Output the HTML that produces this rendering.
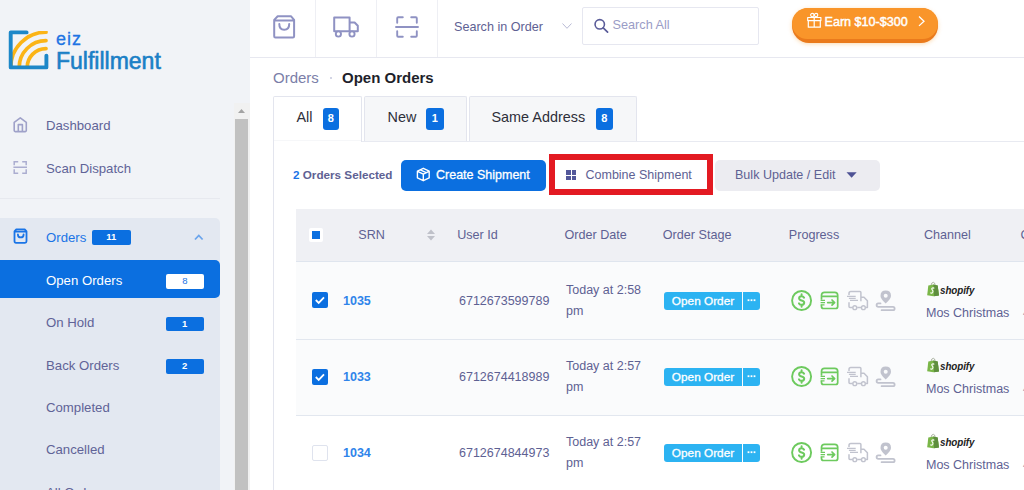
<!DOCTYPE html>
<html><head><meta charset="utf-8">
<style>
*{box-sizing:border-box;margin:0;padding:0}
html,body{width:1024px;height:490px;overflow:hidden;background:#fff}
body{position:relative;font-family:"Liberation Sans",sans-serif;color:#5e6193}
.a{position:absolute;white-space:nowrap}
svg{position:absolute;overflow:visible}
#sb{position:absolute;left:0;top:0;width:250px;height:490px;background:#f1f3f7}
.mi{position:absolute;left:46px;font-size:13.2px;line-height:16px;color:#606397;margin-top:0.5px}
.bd{position:absolute;height:14.4px;border-radius:2px;background:#0b6fe0;color:#fff;font-size:9.5px;font-weight:bold;text-align:center;line-height:14.4px}
.hd{position:absolute;top:227px;font-size:12.6px;line-height:16px;color:#5e6193}
.tab{position:absolute;top:96px;height:45px;border:1px solid #e3e5ee;border-bottom:none;background:#f6f7f9;border-radius:2px 2px 0 0}
.tabt{position:absolute;font-size:14.4px;line-height:17px;color:#2e2f3a;margin-top:1px;margin-left:0.5px}
.tb{position:absolute;top:108.4px;width:16.5px;height:21.3px;border-radius:3px;background:#0b6fe0;color:#fff;font-size:11px;font-weight:bold;text-align:center;line-height:21.3px}
.row{position:absolute;left:296px;width:728px;height:77px}
.rl{position:absolute;left:296px;width:728px;height:1px;background:#e2e7ef}
</style></head><body>

<!-- SIDEBAR -->
<div id="sb"></div>
<svg width="60" height="60" style="left:0;top:0" viewBox="0 0 60 60">
  <defs><clipPath id="lc"><rect x="10" y="31" width="40" height="37"/></clipPath></defs>
  <g clip-path="url(#lc)" fill="none" stroke="#fbb416" stroke-width="3.7" stroke-linecap="round">
    <path d="M46 32.2 A35.2 35.2 0 0 0 10.8 67.4"/>
    <path d="M46 40.6 A26.8 26.8 0 0 0 19.2 67.4"/>
    <path d="M46 48.6 A18.8 18.8 0 0 0 27.2 67.4"/>
  </g>
  <path d="M26.6 32.4 H10.7 V67.4 H46.4 V55.6" fill="none" stroke="#1d87c8" stroke-width="3.9" stroke-linecap="round" stroke-linejoin="round"/>
</svg>
<div class="a" style="left:56px;top:28.5px;font-size:18px;line-height:20px;color:#1f74e3;letter-spacing:1px;-webkit-text-stroke:0.3px #1f74e3">eiz</div>
<div class="a" style="left:56px;top:47px;font-size:23px;line-height:26px;color:#1b80c6;-webkit-text-stroke:0.6px #1b80c6;margin-top:0.5px">Fulfillment</div>

<!-- home -->
<svg width="20" height="20" style="left:10px;top:114px" viewBox="0 0 20 20">
  <path d="M4.2 8.3 L10.3 3.9 L16.3 8.3 V16.6 Q16.3 17.6 15.3 17.6 H5.2 Q4.2 17.6 4.2 16.6 Z M8.3 17.6 V10.6 H12.4 V17.6" fill="none" stroke="#9fa1c9" stroke-width="1.6" stroke-linejoin="round"/>
</svg>
<div class="mi" style="top:117px">Dashboard</div>
<!-- scan -->
<svg width="20" height="20" style="left:10px;top:157px" viewBox="0 0 20 20">
  <path d="M4.2 8.3 V4.8 H8.2 M12.2 4.8 H16.2 V8.3 M4.2 12.2 V16.2 H8.2 M12.2 16.2 H16.2 V12.2 M3.4 10.3 H17" fill="none" stroke="#abadd0" stroke-width="1.5"/>
</svg>
<div class="mi" style="top:160px">Scan Dispatch</div>
<div class="a" style="left:0;top:197.5px;width:220px;height:1px;background:#e7e9ef"></div>

<!-- orders group -->
<div class="a" style="left:0;top:218px;width:220px;height:290px;background:#e3e8f1;border-radius:0 5px 0 0"></div>
<svg width="20" height="20" style="left:10px;top:226px" viewBox="0 0 20 20">
  <path d="M6.3 3.3 H14.7 L16.5 5.4 V15.3 Q16.5 16.8 15 16.8 H6 Q4.5 16.8 4.5 15.3 V5.4 Z M4.6 5.6 H16.4 M7.9 8.4 Q7.9 11.4 10.75 11.4 Q13.6 11.4 13.6 8.4" fill="none" stroke="#1a74e6" stroke-width="1.8" stroke-linejoin="round" stroke-linecap="round"/>
</svg>
<div class="mi" style="top:229px;color:#1a74e6">Orders</div>
<div class="bd" style="left:92px;top:230.4px;width:38.6px">11</div>
<svg width="12" height="10" style="left:193px;top:232px" viewBox="0 0 12 10">
  <path d="M2 7.5 L5.8 3.5 L9.6 7.5" fill="none" stroke="#6aa4ec" stroke-width="1.8"/>
</svg>

<div class="a" style="left:0;top:260.3px;width:220px;height:38px;background:#0b6fe0;border-radius:0 5px 5px 0"></div>
<div class="mi" style="top:272px;color:#fff">Open Orders</div>
<div class="bd" style="left:165.8px;top:274.2px;width:38.2px;background:#fff;color:#1a74e6;font-weight:normal">8</div>
<div class="mi" style="top:314px">On Hold</div>
<div class="bd" style="left:165.5px;top:316.5px;width:38.5px">1</div>
<div class="mi" style="top:357px">Back Orders</div>
<div class="bd" style="left:165.5px;top:359.2px;width:38.5px">2</div>
<div class="mi" style="top:399px">Completed</div>
<div class="mi" style="top:441px">Cancelled</div>
<div class="mi" style="top:484px">All Orders</div>

<!-- scrollbar -->
<div class="a" style="left:234px;top:103px;width:16px;height:387px;background:#f1f1f1"></div>
<svg width="16" height="10" style="left:234px;top:106px" viewBox="0 0 16 10"><path d="M4 7 L7.5 3 L11 7 Z" fill="#a3a3a3"/></svg>
<div class="a" style="left:235px;top:119px;width:13px;height:371px;background:#c1c1c1"></div>

<!-- TOP BAR -->
<div class="a" style="left:250px;top:56.5px;width:774px;height:1px;background:#e7e8f0"></div>
<div class="a" style="left:315px;top:0;width:1px;height:57px;background:#eeeff4"></div>
<div class="a" style="left:376px;top:0;width:1px;height:57px;background:#eeeff4"></div>
<div class="a" style="left:437px;top:0;width:1px;height:57px;background:#eeeff4"></div>

<!-- top icons -->
<svg width="26" height="28" style="left:271px;top:13px" viewBox="0 0 26 28">
  <path d="M6.7 3.2 H19.9 L23.1 6.9 V23.3 Q23.1 24.5 21.9 24.5 H4.4 Q3.2 24.5 3.2 23.3 V6.9 Z M3.4 7.4 H22.9 M8.3 11 Q8.3 16.8 13.2 16.8 Q18.2 16.8 18.2 11" fill="none" stroke="#8f92c3" stroke-width="2" stroke-linejoin="round" stroke-linecap="round"/>
</svg>
<svg width="30" height="26" style="left:330px;top:13px" viewBox="0 0 30 26">
  <path d="M4.2 18.2 V4.6 H19.6 V18.2 Z M19.6 9.5 H24.6 L27.8 12.8 V18.2 H19.6" fill="none" stroke="#8f92c3" stroke-width="2" stroke-linejoin="round"/>
  <circle cx="8.4" cy="21" r="2.6" fill="#fff" stroke="#8f92c3" stroke-width="1.9"/>
  <circle cx="22" cy="21" r="2.6" fill="#fff" stroke="#8f92c3" stroke-width="1.9"/>
</svg>
<svg width="28" height="28" style="left:393px;top:13px" viewBox="0 0 28 28">
  <path d="M4.2 9.8 V5.2 Q4.2 4.2 5.2 4.2 H9.8 M18.2 4.2 H22.8 Q23.8 4.2 23.8 5.2 V9.8 M4.2 18.2 V22.8 Q4.2 23.8 5.2 23.8 H9.8 M18.2 23.8 H22.8 Q23.8 23.8 23.8 22.8 V18.2 M3 14 H25" fill="none" stroke="#8f92c3" stroke-width="1.9" stroke-linecap="round"/>
</svg>
<div class="a" style="left:454px;top:19px;font-size:12.6px;line-height:16px;color:#5e6193">Search in Order</div>
<svg width="14" height="10" style="left:560px;top:21px" viewBox="0 0 14 10"><path d="M2.5 2.5 L7 7.3 L11.5 2.5" fill="none" stroke="#b9bbd6" stroke-width="1"/></svg>
<div class="a" style="left:582px;top:7.3px;width:177px;height:37.5px;border:1px solid #e6e7f0;border-radius:2px;background:#fff"></div>
<svg width="22" height="22" style="left:590px;top:16px" viewBox="0 0 22 22">
  <circle cx="9.75" cy="8.3" r="4.7" fill="none" stroke="#5a5c99" stroke-width="1.6"/>
  <path d="M13.2 11.8 L17.6 16.2" stroke="#5a5c99" stroke-width="1.7" stroke-linecap="round"/>
</svg>
<div class="a" style="left:612.5px;top:16.5px;font-size:12.7px;line-height:16px;color:#9a9cc6">Search All</div>

<!-- earn -->
<div class="a" style="left:791.5px;top:8px;width:146px;height:34.5px;border-radius:17px;background:#ea7a1c;box-shadow:0 1px 4px rgba(247,148,30,0.35)"></div>
<div class="a" style="left:791.5px;top:8px;width:146px;height:31px;border-radius:16px;background:#f9952a"></div>
<svg width="18" height="18" style="left:805px;top:11px" viewBox="0 0 18 18">
  <path d="M2.7 6.5 H15.9 V9.6 H2.7 Z M3.3 9.6 H15.3 V16.2 H3.3 Z M9.2 6.5 V16.2" fill="none" stroke="#fff" stroke-width="1.2" stroke-linejoin="round"/>
  <circle cx="7.3" cy="4.1" r="1.7" fill="none" stroke="#fff" stroke-width="1.1"/>
  <circle cx="11.1" cy="4.1" r="1.7" fill="none" stroke="#fff" stroke-width="1.1"/>
</svg>
<div class="a" style="left:824.5px;top:13.5px;font-size:12.6px;line-height:16px;color:#fff;-webkit-text-stroke:0.45px #fff">Earn $10-$300</div>
<svg width="12" height="14" style="left:916px;top:14px" viewBox="0 0 12 14"><path d="M3 2.5 L8 7.2 L3 11.9" fill="none" stroke="#fff" stroke-width="1.3"/></svg>

<!-- breadcrumb -->
<div class="a" style="left:273px;top:69px;font-size:15px;line-height:18px;color:#7b7ea8">Orders</div>
<div class="a" style="left:329.5px;top:76.5px;width:2px;height:2px;background:#c5c7dc;border-radius:1px"></div>
<div class="a" style="left:342px;top:69px;font-size:15px;line-height:18px;font-weight:bold;color:#1e1f2b">Open Orders</div>

<!-- tabs -->
<div class="a" style="left:273px;top:141px;width:751px;height:349px;border-left:1px solid #e3e5ee;border-top:1px solid #e8eaf1"></div>
<div class="tab" style="left:364px;width:103px"></div>
<div class="tab" style="left:469px;width:167.5px"></div>
<div class="tab" style="left:273px;width:89px;height:46px;background:#fff"></div>
<div class="a" style="left:274px;top:140px;width:87px;height:1px;background:#f6f7f9"></div>
<div class="tabt" style="left:296px;top:108px">All</div>
<div class="tb" style="left:322.5px">8</div>
<div class="tabt" style="left:387px;top:108px">New</div>
<div class="tb" style="left:426px;width:17.6px">1</div>
<div class="tabt" style="left:491px;top:108px">Same Address</div>
<div class="tb" style="left:596px">8</div>

<!-- action bar -->
<div class="a" style="left:293px;top:166.5px;font-size:11.7px;line-height:15px;font-weight:bold;color:#5e6193"><span style="color:#1a74e6">2</span> Orders Selected</div>
<div class="a" style="left:401px;top:160px;width:144.5px;height:31px;border-radius:5px;background:#0b6fe0"></div>
<svg width="16" height="16" style="left:415px;top:165.5px" viewBox="0 0 16 16">
  <path d="M8.3 2.3 L14.2 5.2 V11.8 L8.3 14.7 L2.4 11.8 V5.2 Z M2.6 5.3 L8.3 8.2 L14 5.3 M8.3 8.2 V14.5 M5.3 3.8 L11.1 6.7" fill="none" stroke="#fff" stroke-width="1.4" stroke-linejoin="round"/>
</svg>
<div class="a" style="left:436px;top:167px;font-size:12.5px;line-height:16px;color:#fff;-webkit-text-stroke:0.3px #fff">Create Shipment</div>

<div class="a" style="left:549px;top:154px;width:163.5px;height:40.6px;border:6px solid #e31a22;background:#fff"></div>
<svg width="12" height="12" style="left:565px;top:169px" viewBox="0 0 12 12" shape-rendering="crispEdges">
  <rect x="1" y="1" width="4.6" height="4.6" fill="#53579a"/><rect x="6.6" y="1" width="4.6" height="4.6" fill="#53579a"/>
  <rect x="1" y="6.6" width="4.6" height="4.6" fill="#53579a"/><rect x="6.6" y="6.6" width="4.6" height="4.6" fill="#53579a"/>
</svg>
<div class="a" style="left:585.5px;top:166.7px;font-size:12.5px;line-height:16px;color:#5e6193">Combine Shipment</div>

<div class="a" style="left:715px;top:160px;width:164.5px;height:31px;border-radius:5px;background:#ececf1"></div>
<div class="a" style="left:735px;top:167px;font-size:12.55px;line-height:16px;color:#5e6193">Bulk Update / Edit</div>
<svg width="12" height="8" style="left:846px;top:171px" viewBox="0 0 12 8"><path d="M0.5 1.3 H10.7 L5.6 6.8 Z" fill="#4e5294"/></svg>

<!-- table header -->
<div class="a" style="left:296px;top:209.3px;width:728px;height:53px;background:#eff0f4;border-bottom:1px solid #dfe5ee"></div>
<div class="a" style="left:309px;top:227.5px;width:14px;height:14px;background:#fff;border-radius:2px"></div>
<div class="a" style="left:312px;top:230.5px;width:8px;height:8px;background:#0b6fe0"></div>
<div class="hd" style="left:358.3px">SRN</div>
<svg width="10" height="14" style="left:425.5px;top:228px" viewBox="0 0 10 14"><path d="M1 6 L5 1.5 L9 6 Z M1 8 L5 12.5 L9 8 Z" fill="#bfc1c9"/></svg>
<div class="hd" style="left:457.2px">User Id</div>
<div class="hd" style="left:564.5px">Order Date</div>
<div class="hd" style="left:662.8px">Order Stage</div>
<div class="hd" style="left:788.8px">Progress</div>
<div class="hd" style="left:924px">Channel</div>
<div class="hd" style="left:1020.5px">C</div>

<div class="row" style="top:262.3px;background:#fafbfc"></div>
<div class="a" style="left:312px;top:292.2px;width:15.5px;height:15.8px;border-radius:2px;background:#0b6fe0"></div>
<svg width="16" height="16" style="left:312px;top:292.2px" viewBox="0 0 16 16"><path d="M3.8 8 L6.7 10.9 L12 5.4" fill="none" stroke="#fff" stroke-width="1.8"/></svg>
<div class="a" style="left:343px;top:292.5px;font-size:12.5px;line-height:16px;font-weight:bold;color:#2f84ea">1035</div>
<div class="a" style="left:459px;top:292.5px;font-size:12.5px;line-height:16px;color:#5e6193">6712673599789</div>
<div class="a" style="left:566px;top:280px;font-size:12.5px;line-height:21px;color:#5e6193">Today at 2:58<br>pm</div>
<div class="a" style="left:664px;top:292px;width:78px;height:17.8px;border-radius:3px 0 0 3px;background:#2cb3f2;color:#fff;font-size:11.8px;line-height:19px;text-align:center;-webkit-text-stroke:0.3px #fff">Open Order</div>
<div class="a" style="left:743px;top:292px;width:17px;height:17.8px;border-radius:0 3px 3px 0;background:#2cb3f2"></div>
<svg width="17" height="18" style="left:743px;top:292px" viewBox="0 0 17 18"><g fill="#fff"><rect x="4.6" y="7.3" width="1.8" height="1.8"/><rect x="7.6" y="7.3" width="1.8" height="1.8"/><rect x="10.6" y="7.3" width="1.8" height="1.8"/></g></svg>
<svg width="110" height="24" style="left:788px;top:288px" viewBox="0 0 110 24">
  <circle cx="13.6" cy="12.5" r="9.5" fill="none" stroke="#6dca5e" stroke-width="1.9"/>
  <path d="M16.1 9.7 Q15.3 8.2 13.6 8.2 Q11.1 8.2 11.1 10.3 Q11.1 11.9 13.6 12.5 Q16.2 13.1 16.2 14.7 Q16.2 16.8 13.6 16.8 Q11.8 16.8 11 15.4 M13.6 6.3 V8.2 M13.6 16.8 V18.7" fill="none" stroke="#6dca5e" stroke-width="2" stroke-linecap="round"/>
  <path d="M33.5 11 V7.3 Q33.5 4.3 36.5 4.3 H46.7 Q49.7 4.3 49.7 7.3 V18.5 Q49.7 20.5 47.7 20.5 H35.5 Q33.5 20.5 33.5 18.5 V17.4 M33.6 8.3 H49.6 M39.7 14.6 H46.5 M44 12 L46.6 14.6 L44 17.2" fill="none" stroke="#6dca5e" stroke-width="1.7" stroke-linejoin="round" stroke-linecap="round"/>
  <path d="M32.6 12.3 H37 M32.6 14.6 H37 M32.6 16.9 H36.5" stroke="#6dca5e" stroke-width="1.3"/>
  <path d="M61 7 V5.4 Q61 3.6 62.8 3.6 H72 Q72.9 3.6 72.9 4.5 V13.2 M72.9 9.2 H76 L79.4 12.7 V19.5 H77.6 M73.4 19.5 H69.2 M64.9 19.5 H62 Q61 19.5 61 18.5 V14.3" fill="none" stroke="#c1c3ce" stroke-width="1.5" stroke-linejoin="round"/>
  <path d="M59 8.4 H67.7 M60.9 10.4 H67.7 M62 12.3 H70" stroke="#c1c3ce" stroke-width="1.3"/>
  <circle cx="66.8" cy="19.7" r="1.9" fill="none" stroke="#c1c3ce" stroke-width="1.4"/>
  <circle cx="75.4" cy="19.7" r="1.9" fill="none" stroke="#c1c3ce" stroke-width="1.4"/>
  <path d="M97.7 2.6 Q103 2.6 103 8 Q103 11 97.7 15.4 Q92.5 11 92.5 8 Q92.5 2.6 97.7 2.6 Z" fill="#c1c3ce"/>
  <circle cx="97.7" cy="7.7" r="2" fill="#fafbfc"/>
  <path d="M92.5 15.4 H90.2 Q88.6 15.4 88.6 17 Q88.6 18.8 90.4 18.8 H105 Q106.6 18.8 106.6 20.4 Q106.6 22.2 105 22.2 H93.6" fill="none" stroke="#c1c3ce" stroke-width="1.8" stroke-linecap="round"/>
</svg>
<svg width="14" height="16" style="left:925.5px;top:281px" viewBox="0 0 14 16">
  <path d="M2.3 4.6 L7.3 3.5 L11.7 4.6 L13 14.5 L7.5 15.3 L1.2 14.2 Z" fill="#7ab648"/>
  <path d="M7.3 3.5 L11.7 4.6 L13 14.5 L8.2 15.2 Z" fill="#5e8e3e"/>
  <path d="M5 4.3 Q5.5 1.3 7.3 1.3 Q8.8 1.3 9.2 4" fill="none" stroke="#9aa38f" stroke-width="0.8"/>
  <path d="M8.3 7.3 Q7.5 6.6 6.4 7 Q5.2 7.6 6.3 8.9 Q7.6 10 6.6 11.6 Q5.7 12.5 4.3 11.7" fill="none" stroke="#fff" stroke-width="1.1"/>
</svg>
<div class="a" style="left:940px;top:283px;font-size:11.6px;line-height:13px;font-weight:bold;font-style:italic;color:#222;letter-spacing:-0.1px;transform:scaleX(0.85);transform-origin:0 0">shopify</div>
<div class="a" style="left:926px;top:305px;font-size:12.5px;line-height:16px;color:#5e6193">Mos Christmas</div>
<div class="a" style="left:1023px;top:305px;font-size:12.5px;line-height:16px;color:#9a9cb8">4</div>
<div class="row" style="top:338.6px;background:#fafbfc"></div>
<div class="a" style="left:312px;top:368.79999999999995px;width:15.5px;height:15.8px;border-radius:2px;background:#0b6fe0"></div>
<svg width="16" height="16" style="left:312px;top:368.79999999999995px" viewBox="0 0 16 16"><path d="M3.8 8 L6.7 10.9 L12 5.4" fill="none" stroke="#fff" stroke-width="1.8"/></svg>
<div class="a" style="left:343px;top:368.5px;font-size:12.5px;line-height:16px;font-weight:bold;color:#2f84ea">1033</div>
<div class="a" style="left:459px;top:368.5px;font-size:12.5px;line-height:16px;color:#5e6193">6712674418989</div>
<div class="a" style="left:566px;top:356px;font-size:12.5px;line-height:21px;color:#5e6193">Today at 2:57<br>pm</div>
<div class="a" style="left:664px;top:368px;width:78px;height:17.8px;border-radius:3px 0 0 3px;background:#2cb3f2;color:#fff;font-size:11.8px;line-height:19px;text-align:center;-webkit-text-stroke:0.3px #fff">Open Order</div>
<div class="a" style="left:743px;top:368px;width:17px;height:17.8px;border-radius:0 3px 3px 0;background:#2cb3f2"></div>
<svg width="17" height="18" style="left:743px;top:368px" viewBox="0 0 17 18"><g fill="#fff"><rect x="4.6" y="7.3" width="1.8" height="1.8"/><rect x="7.6" y="7.3" width="1.8" height="1.8"/><rect x="10.6" y="7.3" width="1.8" height="1.8"/></g></svg>
<svg width="110" height="24" style="left:788px;top:364px" viewBox="0 0 110 24">
  <circle cx="13.6" cy="12.5" r="9.5" fill="none" stroke="#6dca5e" stroke-width="1.9"/>
  <path d="M16.1 9.7 Q15.3 8.2 13.6 8.2 Q11.1 8.2 11.1 10.3 Q11.1 11.9 13.6 12.5 Q16.2 13.1 16.2 14.7 Q16.2 16.8 13.6 16.8 Q11.8 16.8 11 15.4 M13.6 6.3 V8.2 M13.6 16.8 V18.7" fill="none" stroke="#6dca5e" stroke-width="2" stroke-linecap="round"/>
  <path d="M33.5 11 V7.3 Q33.5 4.3 36.5 4.3 H46.7 Q49.7 4.3 49.7 7.3 V18.5 Q49.7 20.5 47.7 20.5 H35.5 Q33.5 20.5 33.5 18.5 V17.4 M33.6 8.3 H49.6 M39.7 14.6 H46.5 M44 12 L46.6 14.6 L44 17.2" fill="none" stroke="#6dca5e" stroke-width="1.7" stroke-linejoin="round" stroke-linecap="round"/>
  <path d="M32.6 12.3 H37 M32.6 14.6 H37 M32.6 16.9 H36.5" stroke="#6dca5e" stroke-width="1.3"/>
  <path d="M61 7 V5.4 Q61 3.6 62.8 3.6 H72 Q72.9 3.6 72.9 4.5 V13.2 M72.9 9.2 H76 L79.4 12.7 V19.5 H77.6 M73.4 19.5 H69.2 M64.9 19.5 H62 Q61 19.5 61 18.5 V14.3" fill="none" stroke="#c1c3ce" stroke-width="1.5" stroke-linejoin="round"/>
  <path d="M59 8.4 H67.7 M60.9 10.4 H67.7 M62 12.3 H70" stroke="#c1c3ce" stroke-width="1.3"/>
  <circle cx="66.8" cy="19.7" r="1.9" fill="none" stroke="#c1c3ce" stroke-width="1.4"/>
  <circle cx="75.4" cy="19.7" r="1.9" fill="none" stroke="#c1c3ce" stroke-width="1.4"/>
  <path d="M97.7 2.6 Q103 2.6 103 8 Q103 11 97.7 15.4 Q92.5 11 92.5 8 Q92.5 2.6 97.7 2.6 Z" fill="#c1c3ce"/>
  <circle cx="97.7" cy="7.7" r="2" fill="#fafbfc"/>
  <path d="M92.5 15.4 H90.2 Q88.6 15.4 88.6 17 Q88.6 18.8 90.4 18.8 H105 Q106.6 18.8 106.6 20.4 Q106.6 22.2 105 22.2 H93.6" fill="none" stroke="#c1c3ce" stroke-width="1.8" stroke-linecap="round"/>
</svg>
<svg width="14" height="16" style="left:925.5px;top:357px" viewBox="0 0 14 16">
  <path d="M2.3 4.6 L7.3 3.5 L11.7 4.6 L13 14.5 L7.5 15.3 L1.2 14.2 Z" fill="#7ab648"/>
  <path d="M7.3 3.5 L11.7 4.6 L13 14.5 L8.2 15.2 Z" fill="#5e8e3e"/>
  <path d="M5 4.3 Q5.5 1.3 7.3 1.3 Q8.8 1.3 9.2 4" fill="none" stroke="#9aa38f" stroke-width="0.8"/>
  <path d="M8.3 7.3 Q7.5 6.6 6.4 7 Q5.2 7.6 6.3 8.9 Q7.6 10 6.6 11.6 Q5.7 12.5 4.3 11.7" fill="none" stroke="#fff" stroke-width="1.1"/>
</svg>
<div class="a" style="left:940px;top:359px;font-size:11.6px;line-height:13px;font-weight:bold;font-style:italic;color:#222;letter-spacing:-0.1px;transform:scaleX(0.85);transform-origin:0 0">shopify</div>
<div class="a" style="left:926px;top:381px;font-size:12.5px;line-height:16px;color:#5e6193">Mos Christmas</div>
<div class="a" style="left:1023px;top:381px;font-size:12.5px;line-height:16px;color:#9a9cb8">4</div>
<div class="row" style="top:415px;background:#fff"></div>
<div class="a" style="left:312px;top:445.29999999999995px;width:15.5px;height:15.8px;border-radius:2px;border:1px solid #dfe3ee;background:#fff"></div>
<div class="a" style="left:343px;top:444.5px;font-size:12.5px;line-height:16px;font-weight:bold;color:#2f84ea">1034</div>
<div class="a" style="left:459px;top:444.5px;font-size:12.5px;line-height:16px;color:#5e6193">6712674844973</div>
<div class="a" style="left:566px;top:432px;font-size:12.5px;line-height:21px;color:#5e6193">Today at 2:57<br>pm</div>
<div class="a" style="left:664px;top:444px;width:78px;height:17.8px;border-radius:3px 0 0 3px;background:#2cb3f2;color:#fff;font-size:11.8px;line-height:19px;text-align:center;-webkit-text-stroke:0.3px #fff">Open Order</div>
<div class="a" style="left:743px;top:444px;width:17px;height:17.8px;border-radius:0 3px 3px 0;background:#2cb3f2"></div>
<svg width="17" height="18" style="left:743px;top:444px" viewBox="0 0 17 18"><g fill="#fff"><rect x="4.6" y="7.3" width="1.8" height="1.8"/><rect x="7.6" y="7.3" width="1.8" height="1.8"/><rect x="10.6" y="7.3" width="1.8" height="1.8"/></g></svg>
<svg width="110" height="24" style="left:788px;top:440px" viewBox="0 0 110 24">
  <circle cx="13.6" cy="12.5" r="9.5" fill="none" stroke="#6dca5e" stroke-width="1.9"/>
  <path d="M16.1 9.7 Q15.3 8.2 13.6 8.2 Q11.1 8.2 11.1 10.3 Q11.1 11.9 13.6 12.5 Q16.2 13.1 16.2 14.7 Q16.2 16.8 13.6 16.8 Q11.8 16.8 11 15.4 M13.6 6.3 V8.2 M13.6 16.8 V18.7" fill="none" stroke="#6dca5e" stroke-width="2" stroke-linecap="round"/>
  <path d="M33.5 11 V7.3 Q33.5 4.3 36.5 4.3 H46.7 Q49.7 4.3 49.7 7.3 V18.5 Q49.7 20.5 47.7 20.5 H35.5 Q33.5 20.5 33.5 18.5 V17.4 M33.6 8.3 H49.6 M39.7 14.6 H46.5 M44 12 L46.6 14.6 L44 17.2" fill="none" stroke="#6dca5e" stroke-width="1.7" stroke-linejoin="round" stroke-linecap="round"/>
  <path d="M32.6 12.3 H37 M32.6 14.6 H37 M32.6 16.9 H36.5" stroke="#6dca5e" stroke-width="1.3"/>
  <path d="M61 7 V5.4 Q61 3.6 62.8 3.6 H72 Q72.9 3.6 72.9 4.5 V13.2 M72.9 9.2 H76 L79.4 12.7 V19.5 H77.6 M73.4 19.5 H69.2 M64.9 19.5 H62 Q61 19.5 61 18.5 V14.3" fill="none" stroke="#c1c3ce" stroke-width="1.5" stroke-linejoin="round"/>
  <path d="M59 8.4 H67.7 M60.9 10.4 H67.7 M62 12.3 H70" stroke="#c1c3ce" stroke-width="1.3"/>
  <circle cx="66.8" cy="19.7" r="1.9" fill="none" stroke="#c1c3ce" stroke-width="1.4"/>
  <circle cx="75.4" cy="19.7" r="1.9" fill="none" stroke="#c1c3ce" stroke-width="1.4"/>
  <path d="M97.7 2.6 Q103 2.6 103 8 Q103 11 97.7 15.4 Q92.5 11 92.5 8 Q92.5 2.6 97.7 2.6 Z" fill="#c1c3ce"/>
  <circle cx="97.7" cy="7.7" r="2" fill="#fff"/>
  <path d="M92.5 15.4 H90.2 Q88.6 15.4 88.6 17 Q88.6 18.8 90.4 18.8 H105 Q106.6 18.8 106.6 20.4 Q106.6 22.2 105 22.2 H93.6" fill="none" stroke="#c1c3ce" stroke-width="1.8" stroke-linecap="round"/>
</svg>
<svg width="14" height="16" style="left:925.5px;top:433px" viewBox="0 0 14 16">
  <path d="M2.3 4.6 L7.3 3.5 L11.7 4.6 L13 14.5 L7.5 15.3 L1.2 14.2 Z" fill="#7ab648"/>
  <path d="M7.3 3.5 L11.7 4.6 L13 14.5 L8.2 15.2 Z" fill="#5e8e3e"/>
  <path d="M5 4.3 Q5.5 1.3 7.3 1.3 Q8.8 1.3 9.2 4" fill="none" stroke="#9aa38f" stroke-width="0.8"/>
  <path d="M8.3 7.3 Q7.5 6.6 6.4 7 Q5.2 7.6 6.3 8.9 Q7.6 10 6.6 11.6 Q5.7 12.5 4.3 11.7" fill="none" stroke="#fff" stroke-width="1.1"/>
</svg>
<div class="a" style="left:940px;top:435px;font-size:11.6px;line-height:13px;font-weight:bold;font-style:italic;color:#222;letter-spacing:-0.1px;transform:scaleX(0.85);transform-origin:0 0">shopify</div>
<div class="a" style="left:926px;top:457px;font-size:12.5px;line-height:16px;color:#5e6193">Mos Christmas</div>
<div class="a" style="left:1023px;top:457px;font-size:12.5px;line-height:16px;color:#9a9cb8">4</div>
<div class="rl" style="top:338.6px"></div>
<div class="rl" style="top:415px"></div>
</body></html>
